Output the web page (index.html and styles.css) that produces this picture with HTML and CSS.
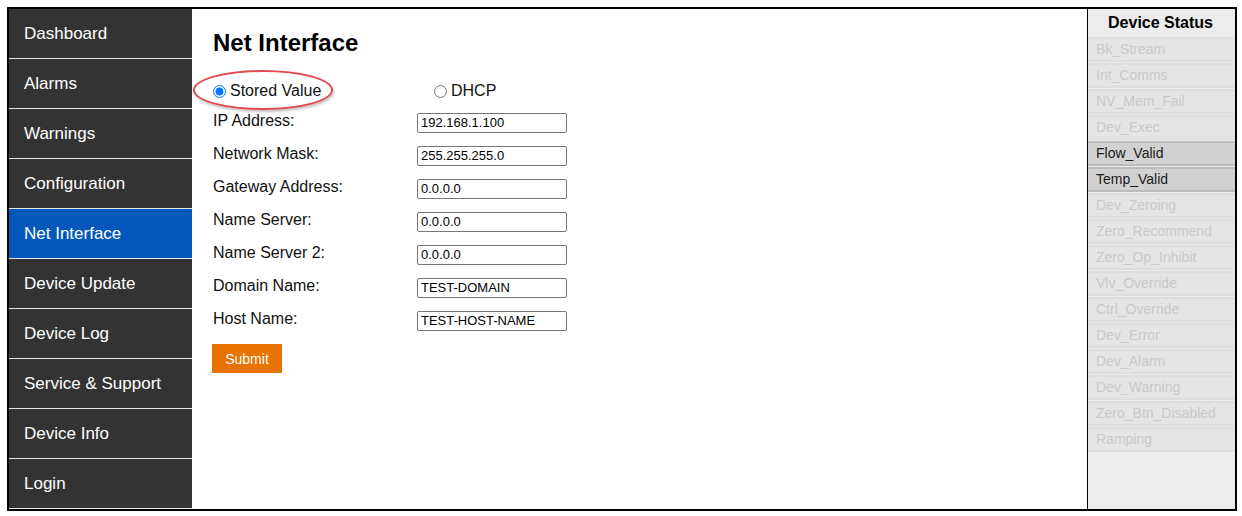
FILE: index.html
```html
<!DOCTYPE html>
<html>
<head>
<meta charset="utf-8">
<title>Net Interface</title>
<link rel="stylesheet" href="styles.css">
</head>
<body>
<div class="frame">
  <nav class="sidebar">
    <a class="nav-item">Dashboard</a>
    <a class="nav-item">Alarms</a>
    <a class="nav-item">Warnings</a>
    <a class="nav-item">Configuration</a>
    <a class="nav-item active">Net Interface</a>
    <a class="nav-item">Device Update</a>
    <a class="nav-item">Device Log</a>
    <a class="nav-item">Service &amp; Support</a>
    <a class="nav-item">Device Info</a>
    <a class="nav-item">Login</a>
  </nav>
  <main class="main">
    <h1 class="title">Net Interface</h1>
    <div class="radio-row">
      <label class="radio-label first"><input type="radio" name="mode" checked> Stored Value</label>
      <label class="radio-label"><input type="radio" name="mode"> DHCP</label>
      <span class="highlight"></span>
    </div>
    <div class="form-grid">
      <label class="field-label">IP Address:</label><input class="field" type="text" value="192.168.1.100">
      <label class="field-label">Network Mask:</label><input class="field" type="text" value="255.255.255.0">
      <label class="field-label">Gateway Address:</label><input class="field" type="text" value="0.0.0.0">
      <label class="field-label">Name Server:</label><input class="field" type="text" value="0.0.0.0">
      <label class="field-label">Name Server 2:</label><input class="field" type="text" value="0.0.0.0">
      <label class="field-label">Domain Name:</label><input class="field" type="text" value="TEST-DOMAIN">
      <label class="field-label">Host Name:</label><input class="field" type="text" value="TEST-HOST-NAME">
    </div>
    <button class="submit" type="button">Submit</button>
  </main>
  <aside class="status">
    <div class="status-title">Device Status</div>
    <div class="status-row">Bk_Stream</div>
    <div class="status-row">Int_Comms</div>
    <div class="status-row">NV_Mem_Fail</div>
    <div class="status-row">Dev_Exec</div>
    <div class="status-row on">Flow_Valid</div>
    <div class="status-row on">Temp_Valid</div>
    <div class="status-row">Dev_Zeroing</div>
    <div class="status-row">Zero_Recommend</div>
    <div class="status-row">Zero_Op_Inhibit</div>
    <div class="status-row">Vlv_Override</div>
    <div class="status-row">Ctrl_Override</div>
    <div class="status-row">Dev_Error</div>
    <div class="status-row">Dev_Alarm</div>
    <div class="status-row">Dev_Warning</div>
    <div class="status-row">Zero_Btn_Disabled</div>
    <div class="status-row">Ramping</div>
  </aside>
</div>
</body>
</html>
```

FILE: styles.css
```css
* { box-sizing: border-box; }
html, body { margin: 0; padding: 0; background: #fff; }
body { font-family: "Liberation Sans", Arial, sans-serif; color: #111; }

.frame {
  margin: 7px 0 0 7px;
  width: 1230px;
  height: 504px;
  border: 2px solid #000;
  display: flex;
  background: #fff;
}

.sidebar {
  width: 183px;
  flex: none;
  background: #333;
  display: flex;
  flex-direction: column;
}
.nav-item {
  height: 50px;
  flex: none;
  border-bottom: 1px solid #e6e6e6;
  color: #fff;
  font-size: 17px;
  padding-left: 15px;
  display: flex;
  align-items: center;
}
.nav-item.active { background: #0558bb; }

.main {
  flex: none;
  width: 896px;
  padding: 20px 0 0 21px;
  border-right: 1px solid #000;
}
.title {
  margin: 0;
  font-size: 24px;
  font-weight: bold;
  line-height: 28px;
  color: #000;
}
.radio-row {
  position: relative;
  display: flex;
  align-items: center;
  height: 30px;
  margin-top: 19px;
  font-size: 16px;
}
.radio-label { display: flex; align-items: center; color: #111; }
.radio-label.first { width: 221px; }
.radio-label input {
  margin: 0 4px 0 0;
  width: 13px;
  height: 13px;
}
.highlight {
  position: absolute;
  left: -20px;
  top: -6px;
  width: 140px;
  height: 40px;
  border: 2.5px solid #e24a50;
  border-radius: 50%;
  box-shadow: 1px 2px 3px rgba(0,0,0,0.25);
  pointer-events: none;
}

.form-grid {
  display: grid;
  grid-template-columns: 204px 150px;
  grid-auto-rows: 33px;
  align-items: center;
  margin-top: -1px;
}
.field-label { font-size: 16px; color: #111; padding-bottom: 1px; }
.field {
  width: 150px;
  height: 20px;
  border: 1px solid #767676;
  border-radius: 2px;
  font-family: "Liberation Sans", Arial, sans-serif;
  font-size: 13px;
  padding: 1px 3px;
  color: #000;
  margin-top: 2px;
}
.submit {
  margin-top: 8px;
  margin-left: -1px;
  width: 70px;
  height: 29px;
  background: #e87300;
  border: none;
  color: #fff;
  font-family: "Liberation Sans", Arial, sans-serif;
  font-size: 14px;
  padding: 0;
}

.status {
  flex: 1;
  background: #ececec;
  display: flex;
  flex-direction: column;
}
.status-title {
  height: 28px;
  line-height: 27px;
  text-align: center;
  font-weight: bold;
  font-size: 16px;
  color: #000;
  padding-right: 2px;
}
.status-row {
  height: 25px;
  margin-bottom: 1px;
  border-top: 2px solid #dedede;
  border-bottom: 2px solid #dedede;
  background: #e5e5e5;
  color: #c9c9c9;
  font-size: 14px;
  line-height: 21px;
  padding-left: 8px;
}
.status-row.on {
  background: #d1d1d1;
  border-color: #bcbcbc;
  color: #1a1a1a;
}
```
